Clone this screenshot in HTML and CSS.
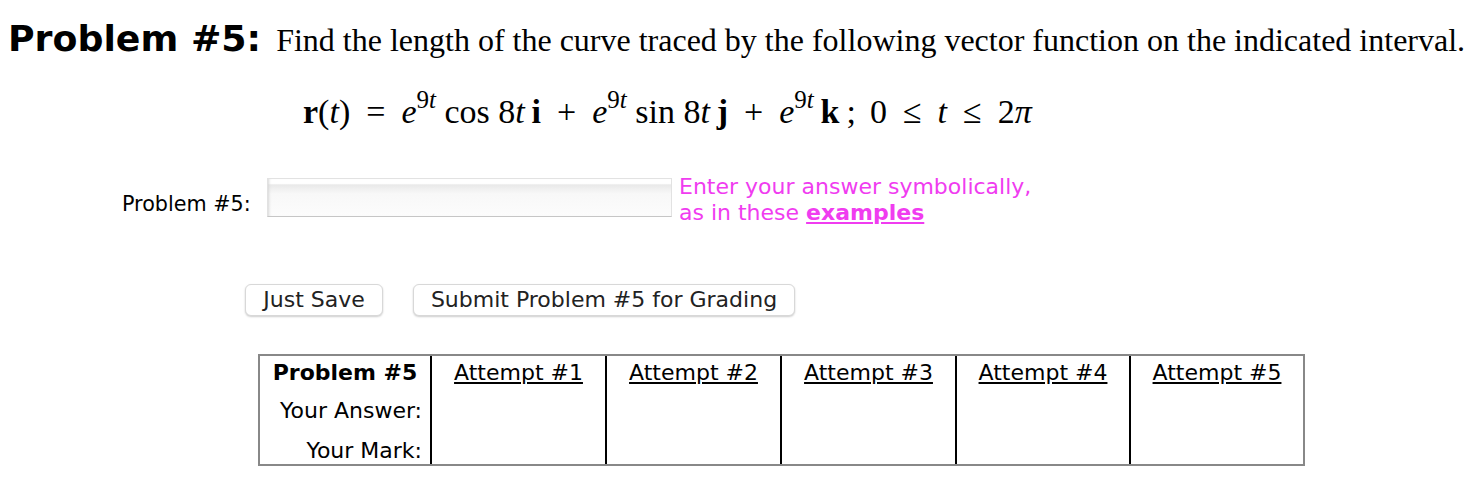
FILE: index.html
```html
<!DOCTYPE html>
<html>
<head>
<meta charset="utf-8">
<link rel="stylesheet" href="styles.css">
</head>
<body>
<div class="page">
  <div class="title">
    <span class="ptitle">Problem #5:</span>
    <span class="ptext">Find the length of the curve traced by the following vector function on the indicated interval.</span>
  </div>
  <div class="formula">
    <b>r</b>(<i>t</i>)<span class="op">=</span><i>e</i><sup>9<i>t</i></sup> cos 8<i>t</i>&#8201;<b>i</b><span class="op">+</span><i>e</i><sup>9<i>t</i></sup> sin 8<i>t</i>&#8201;<b>j</b><span class="op">+</span><i>e</i><sup>9<i>t</i></sup>&#8201;<b>k</b><span class="semi">;</span>0<span class="op2">≤</span><i>t</i><span class="op2">≤</span>2<i>π</i>
  </div>
  <div class="answer-row">
    <label class="alabel">Problem #5:</label>
    <div class="abox"></div>
    <div class="hint">Enter your answer symbolically,<br>as in these <a href="#" class="ex">examples</a></div>
  </div>
  <div class="buttons">
    <button class="btn btn-save">Just Save</button>
    <button class="btn btn-submit">Submit Problem #5 for Grading</button>
  </div>
  <table class="attempts">
    <tr class="r1">
      <th class="rowhead c1">Problem #5</th>
      <td class="att c2"><a href="#">Attempt #1</a></td>
      <td class="att c3"><a href="#">Attempt #2</a></td>
      <td class="att c4"><a href="#">Attempt #3</a></td>
      <td class="att c5"><a href="#">Attempt #4</a></td>
      <td class="att c6"><a href="#">Attempt #5</a></td>
    </tr>
    <tr class="r2">
      <td class="rowhead">Your Answer:</td>
      <td></td><td></td><td></td><td></td><td></td>
    </tr>
    <tr class="r3">
      <td class="rowhead">Your Mark:</td>
      <td></td><td></td><td></td><td></td><td></td>
    </tr>
  </table>
</div>
</body>
</html>
```

FILE: styles.css
```css
html, body {
  margin: 0;
  padding: 0;
  background: #fff;
}
.page {
  padding: 17px 0 0 8px;
  font-family: "DejaVu Sans", Verdana, sans-serif;
  color: #000;
}
.title {
  display: flex;
  align-items: baseline;
  gap: 15px;
  white-space: nowrap;
}
.ptitle {
  font-weight: bold;
  font-size: 36.3px;
}
.ptext {
  font-family: "Liberation Serif", "Times New Roman", serif;
  font-size: 32px;
}
.formula {
  font-family: "Liberation Serif", "Times New Roman", serif;
  font-size: 34px;
  margin: 33px 0 0 295px;
  white-space: nowrap;
  line-height: 38px;
}
.formula sup {
  font-size: 25px;
  vertical-align: 15px;
  line-height: 0;
}
.formula .op {
  margin: 0 16px;
}
.formula .op2 {
  margin: 0 16px;
}
.formula .semi {
  margin: 0 14px 0 7px;
}
.answer-row {
  display: flex;
  align-items: flex-start;
  margin-top: 43px;
}
.alabel {
  font-size: 20.7px;
  line-height: 26px;
  margin: 17px 0 0 114px;
  width: 145px;
}
.abox {
  margin-top: 4px;
  width: 403px;
  height: 37px;
  border: 1px solid #e2e2e2;
  border-bottom-color: #c6c6c6;
  background: linear-gradient(#fff 0, #fff 12%, #e9e9e9 16%, #f8f8f8 40%, #fcfcfc 100%);
  box-shadow: inset 3px 0 3px -2px #d6d6d6;
}
.hint {
  color: #f03cf0;
  font-size: 22px;
  line-height: 26px;
  margin-left: 7px;
  white-space: nowrap;
}
.hint .ex {
  color: #f03cf0;
  font-weight: bold;
  text-decoration: underline;
}
.buttons {
  display: flex;
  gap: 30px;
  margin: 58px 0 0 237px;
}
.btn {
  font-family: "DejaVu Sans", Verdana, sans-serif;
  font-size: 22px;
  height: 32px;
  padding: 0;
  background: #fff;
  border: 1px solid #d8d8d8;
  border-radius: 6px;
  box-shadow: 0 1px 2px rgba(0,0,0,0.2);
  color: #222;
  line-height: 30px;
}
.btn-save { width: 138px; }
.btn-submit { width: 382px; }
.attempts {
  margin: 38px 0 0 250px;
  border-collapse: separate;
  border-spacing: 0;
  border: 2px solid #888;
  font-size: 22px;
  table-layout: fixed;
  width: 1047px;
}
.attempts td, .attempts th {
  box-sizing: border-box;
  padding: 0;
  line-height: 34px;
  vertical-align: top;
  border-left: 2px solid #000;
  text-align: center;
  white-space: nowrap;
}
.attempts .rowhead {
  border-left: none;
}
.attempts td.rowhead {
  text-align: right;
  padding-right: 8px;
}
.attempts th.rowhead {
  font-weight: bold;
}
.r1 td, .r1 th, .r2 td { height: 38px; }
.attempts .r3 td {
  height: 32px;
  line-height: 27px;
  padding-top: 5px;
}
.c1 { width: 170px; }
.c2, .c3, .c4 { width: 175px; }
.c5, .c6 { width: 174px; }
.attempts a {
  color: #000;
  text-decoration: underline;
}
```
